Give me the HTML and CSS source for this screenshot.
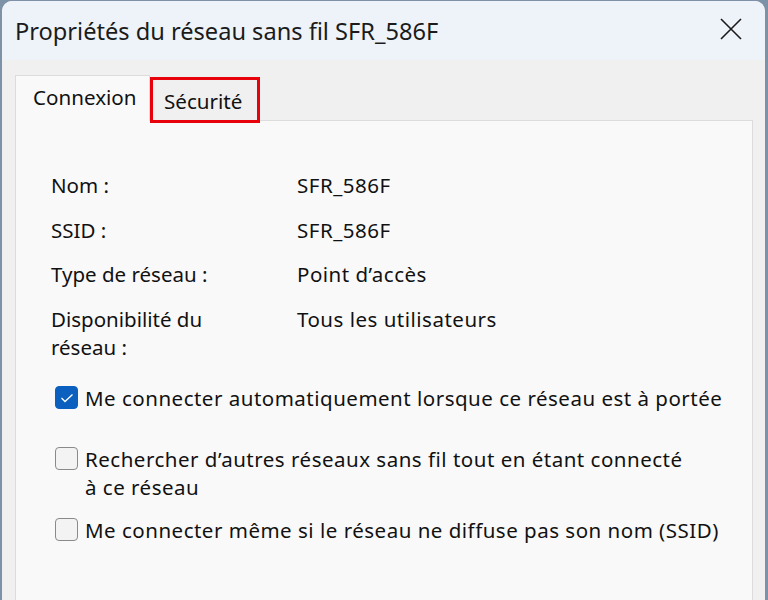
FILE: index.html
```html
<!DOCTYPE html>
<html lang="fr">
<head>
<meta charset="utf-8">
<title>Propriétés du réseau sans fil SFR_586F</title>
<link rel="stylesheet" href="styles.css">
</head>
<body>
<div class="window">
  <div class="titlebar">
    <span class="title">Propriétés du réseau sans fil SFR_586F</span>
    <button class="close" aria-label="Fermer">
      <svg width="22" height="22" viewBox="0 0 22 22"><path d="M1 1L21 21M21 1L1 21" stroke="#1a1a1a" stroke-width="1.6" fill="none"/></svg>
    </button>
  </div>
  <div class="client">
    <div class="tabs">
      <div class="tab active">Connexion</div>
      <div class="tab marked">Sécurité</div>
    </div>
    <div class="panel">
      <div class="props">
        <div class="label">Nom :</div><div class="value">SFR_586F</div>
        <div class="label">SSID :</div><div class="value">SFR_586F</div>
        <div class="label">Type de réseau :</div><div class="value">Point d’accès</div>
        <div class="label">Disponibilité du<br>réseau :</div><div class="value">Tous les utilisateurs</div>
      </div>
      <label class="check first">
        <span class="box checked"><svg width="14" height="10" viewBox="0 0 14 10"><path d="M1.5 5L5 8.5L12.5 1.5" stroke="#fff" stroke-width="1.3" fill="none"/></svg></span>
        <span class="text">Me connecter automatiquement lorsque ce réseau est à portée</span>
      </label>
      <label class="check second">
        <span class="box"></span>
        <span class="text">Rechercher d’autres réseaux sans fil tout en étant connecté<br>à ce réseau</span>
      </label>
      <label class="check third">
        <span class="box"></span>
        <span class="text">Me connecter même si le réseau ne diffuse pas son nom (SSID)</span>
      </label>
    </div>
  </div>
</div>
</body>
</html>
```

FILE: styles.css
```css
html, body {
  margin: 0;
  height: 100%;
  overflow: hidden;
}
body {
  background: #7d92a6;
  font-family: "Noto Sans", "Open Sans", sans-serif;
  color: #111;
}
.window {
  margin: 1px 3px 0 2px;
  height: 620px;
  border-radius: 10px 10px 0 0;
  overflow: hidden;
  background: #f0f0f0;
}
.titlebar {
  height: 59px;
  background: #eef3f9;
  display: flex;
  align-items: center;
  justify-content: space-between;
  padding: 0 23px 0 13px;
}
.title {
  font-size: 23.6px;
  color: #1b1b1b;
  margin-top: 1px;
}
.close {
  border: 0;
  background: none;
  padding: 0;
  display: flex;
  margin-top: -3px;
}
.client {
  padding: 15px 12px 0 13px;
}
.tabs {
  display: flex;
  align-items: flex-end;
  height: 45px;
}
.tab {
  font-size: 20.6px;
  box-sizing: border-box;
}
.tab.active {
  width: 135px;
  height: 46px;
  background: #f9f9f9;
  border: 1px solid #dcdcdc;
  border-bottom: 0;
  padding: 7px 0 0 17px;
  position: relative;
  z-index: 1;
  margin-bottom: -1px;
}
.tab.marked {
  width: 104px;
  height: 40px;
  margin-left: 3px;
  background: #f0f0f0;
  padding: 7px 0 0 11px;
  outline: 3px solid #e8000b;
  position: relative;
  z-index: 2;
}
.panel {
  background: #f9f9f9;
  border: 1px solid #dcdcdc;
  height: 520px;
  padding: 50px 0 0 35px;
  font-size: 20.5px;
}
.props {
  display: grid;
  grid-template-columns: 246px auto;
  row-gap: 16.7px;
  line-height: 28px;
}
.value,
.check .text {
  letter-spacing: 0.5px;
}
.check {
  display: flex;
  align-items: flex-start;
  gap: 7px;
  line-height: 28px;
}
.check.first { margin: 23px 0 0 4px; }
.check.second { margin: 33px 0 0 4px; }
.check.third { margin: 15px 0 0 4px; }
.box {
  width: 21px;
  height: 21px;
  flex: none;
  border: 1px solid #8a8a8a;
  border-radius: 4px;
  background: #f3f3f3;
  margin-top: 2px;
  display: flex;
  align-items: center;
  justify-content: center;
}
.box.checked {
  background: #0a5fbf;
  border-color: #0a5fbf;
}
```
